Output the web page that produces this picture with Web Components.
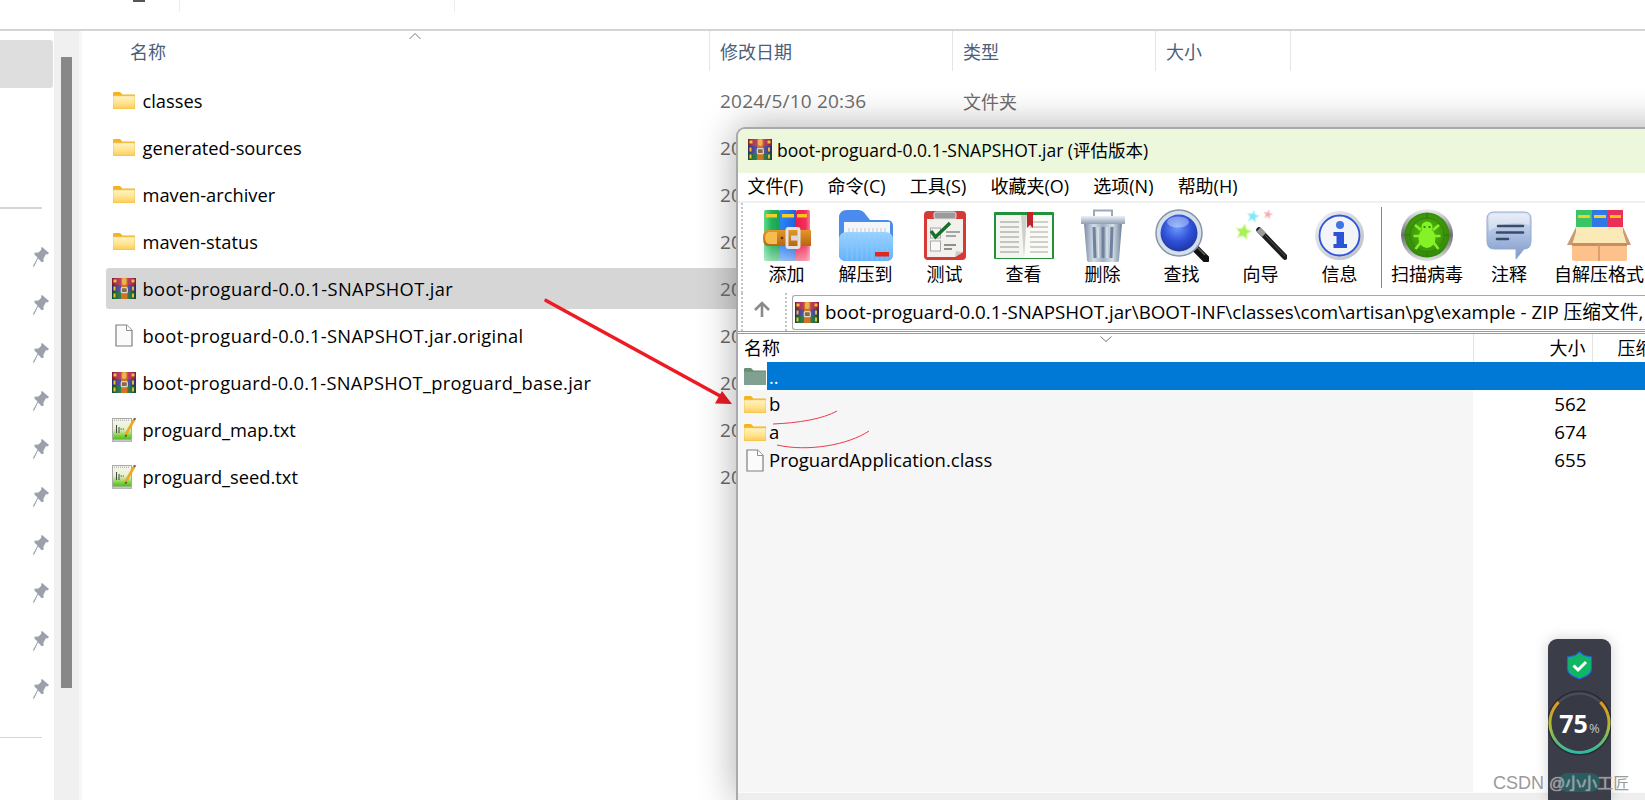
<!DOCTYPE html>
<html lang="zh-CN"><head><meta charset="utf-8"><title>WinRAR</title>
<style>
html,body{margin:0;padding:0;background:#fff}
body{width:1645px;height:800px;overflow:hidden;position:relative;font-family:"Open Sans","Noto Sans CJK SC",sans-serif;font-size:18px;color:#000}
</style></head><body>
<win-explorer>
  <file-row icon="folder" date="2024/5/10 20:36" type="文件夹">classes</file-row>
  <file-row icon="folder" date="20">generated-sources</file-row>
  <file-row icon="folder" date="20">maven-archiver</file-row>
  <file-row icon="folder" date="20">maven-status</file-row>
  <file-row icon="rar" date="20" selected style="--ls:.36px">boot-proguard-0.0.1-SNAPSHOT.jar</file-row>
  <file-row icon="doc" date="20" style="--ls:.33px">boot-proguard-0.0.1-SNAPSHOT.jar.original</file-row>
  <file-row icon="rar" date="20" style="--ls:.3px">boot-proguard-0.0.1-SNAPSHOT_proguard_base.jar</file-row>
  <file-row icon="txt" date="20">proguard_map.txt</file-row>
  <file-row icon="txt" date="20">proguard_seed.txt</file-row>
</win-explorer>
<annotation-arrow></annotation-arrow>
<rar-window></rar-window>
<guard-widget></guard-widget>
<water-mark>CSDN <span style="font-size:16px">@小小工匠</span></water-mark>
<script>
const star=(cx,cy,r,f,s)=>{let p=[];for(let i=0;i<10;i++){const a=-Math.PI/2+i*Math.PI/5+.2,q=i%2?r*.5:r;p.push((cx+q*Math.cos(a)).toFixed(1)+','+(cy+q*Math.sin(a)).toFixed(1));}return `<polygon points="${p.join(' ')}" fill="${f}" stroke="${s}" stroke-width="1.2" stroke-linejoin="round"/>`;};
const ICONS={
rar:[24,21,`<defs><linearGradient id="b" x1="0" x2="1"><stop offset="0" stop-color="#000" stop-opacity=".35"/><stop offset=".5" stop-color="#fff" stop-opacity=".1"/><stop offset="1" stop-color="#000" stop-opacity=".35"/></linearGradient></defs>
<rect width="24" height="7" fill="#c2244f"/><rect y="7" width="24" height="7" fill="#3f3f9f"/><rect y="14" width="24" height="7" fill="#17703a"/><rect width="24" height="21" fill="url(#b)"/>
<rect x="1.5" y="1.5" width="3" height="3" fill="#f2c12e"/><rect x="19.5" y="1.5" width="3" height="3" fill="#f2c12e"/><rect x="1.5" y="8.5" width="2" height="4" fill="#f2c12e"/><rect x="20" y="8.5" width="2" height="4" fill="#e8b93a"/><rect x="1.5" y="15.5" width="2" height="4" fill="#f2c12e"/><rect x="20" y="15.5" width="2" height="4" fill="#e8b93a"/>
<rect x="9" y="0" width="6.5" height="21" fill="#cf7420"/><rect x="10" y="0" width="4.5" height="7" rx="2" fill="#eab455"/><rect x="9.3" y="9.7" width="6" height="5" rx="1" fill="#8d6a3c" stroke="#d8d8d8" stroke-width="1.2"/>`],
folder:[22,17,`<defs><linearGradient id="g" x1="0" y1="0" x2="0" y2="1"><stop offset="0" stop-color="#fff4c4"/><stop offset=".55" stop-color="#ffe48f"/><stop offset="1" stop-color="#fdcb55"/></linearGradient></defs>
<path d="M0 1.2Q0 0 1.2 0H7L9.5 2.6H22V6H0Z" fill="#f5b41f"/><path d="M0 3.8H22V16.2Q22 17 21.2 17H.8Q0 17 0 16.2Z" fill="url(#g)" stroke="#eab53a" stroke-width=".6"/>`],
up:[22,17,`<path d="M0 1.2Q0 0 1.2 0H7L9.5 2.6H22V6H0Z" fill="#6d8c74"/><path d="M0 3.8H22V17H0Z" fill="#7ea191"/>`],
doc:[18,23,`<path d="M1 1H11.5L17 6.5V22H1Z" fill="#fbfbfb" stroke="#7f7f7f" stroke-width="1.2"/><path d="M11.5 1V6.5H17" fill="#fff" stroke="#8f8f8f" stroke-width="1"/>`],
txt:[24,24,`<defs><linearGradient id="t" x1="0" y1="0" x2="0" y2="1"><stop offset="0" stop-color="#f6f8f0"/><stop offset=".45" stop-color="#e6f0cc"/><stop offset=".75" stop-color="#7fd13a"/><stop offset="1" stop-color="#3ea72d"/></linearGradient></defs>
<rect x=".5" y=".5" width="19" height="23" fill="url(#t)" stroke="#a9a9a9"/><path d="M2 2.2H18" stroke="#9a9a9a" stroke-dasharray="1 1"/><path d="M4.5 7V15M7 9V15" stroke="#444" stroke-width="1"/><path d="M8.5 11H12" stroke="#555" stroke-dasharray="1.5 .8"/><rect x=".5" y="21.5" width="19" height="2" fill="#c6c6c6"/>
<path d="M22.5 1L13.5 17" stroke="#f0a81e" stroke-width="2.6"/><path d="M13.8 16.4L12.6 19.6L15.2 17.6Z" fill="#333"/><path d="M22 1.8L23.4.2" stroke="#666" stroke-width="2"/>`],
add:[48,51,`<defs><linearGradient id="a1" x1="0" x2="1"><stop offset="0" stop-color="#5fd98a"/><stop offset=".45" stop-color="#23b45c"/><stop offset="1" stop-color="#1c9f50"/></linearGradient><linearGradient id="a2" x1="0" x2="1"><stop offset="0" stop-color="#2a86f2"/><stop offset=".6" stop-color="#2472e8"/><stop offset="1" stop-color="#2560d4"/></linearGradient><linearGradient id="a3" x1="0" x2="1"><stop offset="0" stop-color="#e81f4c"/><stop offset=".7" stop-color="#f1305b"/><stop offset="1" stop-color="#f97d9b"/></linearGradient><linearGradient id="a4" x1="0" x2="0" y2="1"><stop offset="0" stop-color="#e3962a"/><stop offset="1" stop-color="#b86512"/></linearGradient><linearGradient id="a5" x1="0" x2="0" y2="1"><stop offset=".6" stop-color="#fff" stop-opacity="0"/><stop offset="1" stop-color="#fff" stop-opacity=".5"/></linearGradient></defs>
<rect x="1" width="16" height="51" rx="1.5" fill="url(#a1)"/><rect x="17" width="16" height="51" fill="url(#a2)"/><rect x="33" width="14" height="51" rx="1.5" fill="url(#a3)"/><rect x="1" width="46" height="51" fill="url(#a5)"/>
<rect x="3" y="4" width="11" height="3.5" fill="#f3cf2a"/><rect x="19" y="4" width="12" height="3.5" fill="#f3cf2a"/><rect x="34" y="4" width="10" height="3.5" fill="#f6c21c"/>
<path d="M5 20H48V36H5Q0 36 0 28Q0 20 5 20Z" fill="url(#a4)"/><path d="M6 22Q2 23 2 28Q2 33 6 34H14V22Z" fill="#f5bc4e"/><circle cx="19" cy="28" r="1.3" fill="#5a3208"/>
<rect x="24" y="18.5" width="12" height="19" rx="1.5" fill="none" stroke="#e3e3e3" stroke-width="3"/><rect x="28" y="25.5" width="8" height="5" fill="#d9d9d9"/>`],
extract:[54,51,`<defs><linearGradient id="e1" x1="0" x2="0" y2="1"><stop offset="0" stop-color="#9bd3ff"/><stop offset="1" stop-color="#64b2fb"/></linearGradient></defs>
<path d="M0 8Q0 0 8 0H19Q24 0 27 5L31 10H48Q54 10 54 16V44Q54 51 47 51H7Q0 51 0 44Z" fill="#4a8bed"/><path d="M5 12H51V30H5Z" fill="#f4f6f8"/><path d="M10 18V28M14 18V28M18 18V28M22 18V28M26 18V28M30 18V28M34 18V28M38 18V28M42 18V28M46 18V28" stroke="#c3cbd4"/>
<path d="M0 30Q0 22 8 22H46Q54 22 54 30V44Q54 51 47 51H7Q0 51 0 44Z" fill="url(#e1)"/><path d="M8 24V50M13 24V50M18 24V50M23 24V50M28 24V50M33 24V50M38 24V50M43 24V50M48 24V50" stroke="#8ec8fb" stroke-width=".8"/><rect x="36" y="42" width="14" height="4.5" fill="#e0281f"/>`],
test:[42,49,`<rect width="42" height="49" rx="4" fill="#d63a36"/><path d="M3 8H39V41L31 46H3Z" fill="#f3f1ee"/><path d="M31 46L39 41L32 40Z" fill="#cfcac5"/><rect x="10" y="1" width="22" height="7" rx="2" fill="#9a9a9a" stroke="#e3e3e3"/><rect x="6.5" y="17" width="10" height="10" fill="none" stroke="#a8a8a8"/><path d="M7 20L11.5 26L26 12" fill="none" stroke="#17702a" stroke-width="3.4"/><path d="M22 21H36M22 25H32" stroke="#8c8c8c" stroke-width="1.3"/><rect x="6.5" y="30" width="10" height="10" fill="#f8f8f8" stroke="#a8a8a8"/><path d="M20 34H32M20 38H28" stroke="#6f6f6f" stroke-width="1.5"/>`],
view:[60,49,`<rect y="1" width="60" height="47" rx="1" fill="#23903c"/><path d="M2 4H27Q30 4 30 7V47H2Z" fill="#f4f4f0"/><path d="M58 4H33Q30 4 30 7V47H58Z" fill="#fafaf6"/><path d="M27 4L30 47L33 4Z" fill="#d0d0ca"/><path d="M6 11H25M6 16H25M6 21H25M6 26H25M6 31H25M6 36H25M6 41H25" stroke="#b5b5b0" stroke-width="1.4"/><path d="M36 11H54M36 16H54M36 21H54M36 26H54M36 31H54M36 36H54M36 41H54" stroke="#c3c3be" stroke-width="1.4"/><path d="M33 1H39V17L36 14L33 17Z" fill="#c2232b"/>`],
del:[46,53,`<defs><linearGradient id="d1" x1="0" x2="1"><stop offset="0" stop-color="#7a8ea7"/><stop offset=".25" stop-color="#d3dce6"/><stop offset=".5" stop-color="#9fb0c3"/><stop offset=".75" stop-color="#d6dee7"/><stop offset="1" stop-color="#6e829b"/></linearGradient><linearGradient id="d2" x1="0" y1="0" x2="0" y2="1"><stop offset="0" stop-color="#eef2f6"/><stop offset="1" stop-color="#8ea0b6"/></linearGradient></defs>
<path d="M14 7V1.5H32V7" fill="none" stroke="#9aa9ba" stroke-width="2"/><path d="M1 7H45V15H1Z" fill="url(#d2)"/><path d="M4 15H42L39 51Q39 53 36 53H10Q7 53 7 51Z" fill="url(#d1)"/><path d="M14 18L15 49M23 18V49M32 18L31 49" stroke="#6e829b" stroke-width="3"/><path d="M18 18L18.6 49M27 18L27 49" stroke="#f0f3f7" stroke-width="1.2" opacity=".8"/>`],
find:[54,53,`<defs><radialGradient id="f1" cx=".45" cy=".35" r=".7"><stop offset="0" stop-color="#6d9cff"/><stop offset=".55" stop-color="#2f50d8"/><stop offset="1" stop-color="#1b3398"/></radialGradient></defs>
<path d="M37 36L51 50" stroke="#111" stroke-width="7.5" stroke-linecap="round"/><path d="M39 35L50 46" stroke="#666" stroke-width="1.4"/><circle cx="24" cy="24" r="23" fill="#d6dfe9" stroke="#8495ab" stroke-width="1.5"/><circle cx="24" cy="24" r="18.5" fill="url(#f1)"/><ellipse cx="23" cy="13" rx="11" ry="5.5" fill="#fff" opacity=".35"/>`],
wiz:[52,50,`${star(18,6.5,6,'#7fe8f8','#c7f4fb')}${star(33,4.5,4.2,'#f7a9ad','#fbd1d3')}${star(8.5,22,8,'#a8f158','#dcfbae')}<path d="M24 20L50 47" stroke="#1d1d1d" stroke-width="5.5" stroke-linecap="round"/><path d="M23.5 19.5L29 25" stroke="#9b9b9b" stroke-width="5.5"/><path d="M30 25L50 46" stroke="#555" stroke-width="1"/>`],
info:[49,49,`<defs><linearGradient id="i1" x1="0" y1="0" x2="1" y2="1"><stop offset="0" stop-color="#eef0f4"/><stop offset="1" stop-color="#b9bdc6"/></linearGradient></defs><circle cx="24.5" cy="24.5" r="24.5" fill="url(#i1)"/><circle cx="24.5" cy="24.5" r="20" fill="#f3f4f7" stroke="#2f55d9" stroke-width="1.8"/><circle cx="25" cy="14" r="4" fill="#3d74e8"/><path d="M18.5 21H29V33H32V37H18.5V33H21.5V25H18.5Z" fill="#2a53d8"/>`],
scan:[52,52,`<defs><radialGradient id="s1" cx=".5" cy=".45" r=".62"><stop offset="0" stop-color="#58bd10"/><stop offset="1" stop-color="#2c7f08"/></radialGradient><linearGradient id="s2" x1="0" y1="0" x2="0" y2="1"><stop offset="0" stop-color="#f0f2f2"/><stop offset=".5" stop-color="#6c6e6d"/><stop offset="1" stop-color="#dfe2e2"/></linearGradient></defs><circle cx="26" cy="26" r="26" fill="url(#s2)"/><circle cx="26" cy="26" r="22.5" fill="url(#s1)"/><circle cx="26" cy="26" r="17" fill="none" stroke="#327f0a" stroke-width="1"/><path d="M26 4V9M26 43V48M4 26H9M43 26H48" stroke="#327f0a" stroke-width="1.4"/>
<g fill="none" stroke="#84f226" stroke-width="2.6"><path d="M14 16L20 21M38 16L32 21M12.5 27H19M39.5 27H33M14.5 40L20 33M37.5 40L32 33"/></g><ellipse cx="26" cy="29" rx="8.5" ry="10" fill="#84f226"/><circle cx="26" cy="18" r="5.5" fill="#84f226"/><circle cx="23.5" cy="18" r="1.1" fill="#2a7a06"/><circle cx="28.5" cy="18" r="1.1" fill="#2a7a06"/>`],
note:[46,49,`<defs><linearGradient id="n1" x1="0" y1="0" x2="0" y2="1"><stop offset="0" stop-color="#dfe7f6"/><stop offset=".5" stop-color="#a9bde0"/><stop offset="1" stop-color="#7f99c9"/></linearGradient></defs><path d="M8 1H38Q45 1 45 8V30Q45 38 38 38H38L30 48V38H8Q1 38 1 30V8Q1 1 8 1Z" fill="url(#n1)" stroke="#94a9cf"/><path d="M8 3H38Q43 3 43 8V14Q23 8 3 20V8Q3 3 8 3Z" fill="#fff" opacity=".35"/><path d="M12 15H37M11 21.5H37M11 28H22" stroke="#394b69" stroke-width="2.6" stroke-linecap="round"/>`],
sfx:[64,51,`<rect x="9" y="0" width="16" height="20" fill="#38c566"/><rect x="25" y="0" width="16" height="20" fill="#2f78e6"/><rect x="41" y="0" width="15" height="20" fill="#ea2f58"/><rect x="11" y="5" width="12" height="3" fill="#f3cf2a"/><rect x="27" y="5" width="12" height="3" fill="#f3cf2a"/><rect x="43" y="5" width="11" height="3" fill="#f6c21c"/>
<path d="M9 17H56L60 33H5Z" fill="#fbeab8"/><path d="M9 17L0 35H5L9 22ZM56 17L64 35H60L56 22Z" fill="#c99a74"/><path d="M5 33H60V49Q60 51 58 51H7Q5 51 5 49Z" fill="#fdc18c"/><path d="M5 33H60V36H5Z" fill="#c98e5f"/><path d="M32 34V51" stroke="#cf9569" stroke-width="1.5"/>`]
};
function def(name,html,init){const t=document.createElement('template');t.innerHTML=html;customElements.define(name,class extends HTMLElement{connectedCallback(){if(this.shadowRoot)return;const r=this.attachShadow({mode:'open'});r.appendChild(t.content.cloneNode(true));init&&init(this,r);}});}
customElements.define('app-icon',class extends HTMLElement{
  static get observedAttributes(){return ['name'];}
  attributeChangedCallback(){this.render();}
  connectedCallback(){this.render();}
  render(){const n=this.getAttribute('name');if(!n||!ICONS[n])return;const [w,h,b]=ICONS[n];const r=this.shadowRoot||this.attachShadow({mode:'open'});r.innerHTML=`<style>:host{display:inline-flex;flex:none}svg{display:block}</style><svg xmlns="http://www.w3.org/2000/svg" width="${w}" height="${h}" viewBox="0 0 ${w} ${h}">${b}</svg>`;}
});
def('win-explorer',`<style>:host{display:flex;flex-direction:column;width:1645px;height:800px}
.top{height:29px;flex:none;border-bottom:2px solid #d4d4d4;display:flex;position:relative;box-sizing:content-box}
.t1{width:179px;height:12px;position:relative;border-right:1px solid #ececec}.t1 i{position:absolute;left:133px;top:0;width:12px;height:1.5px;background:#555}
.t2{width:274px;height:12px;border-right:1px solid #ececec}
.main{flex:1;display:flex;min-height:0}</style>
<div class="top"><div class="t1"><i></i></div><div class="t2"></div></div>
<div class="main"><nav-side></nav-side><file-pane><slot></slot></file-pane></div>`);
def('nav-side',`<style>:host{display:flex;flex:none;width:79px}
.items{width:54px;display:flex;flex-direction:column;padding-top:9px;box-sizing:border-box}
.sel{height:48px;width:53px;background:#dedede;border-radius:0 3px 3px 0;flex:none}
.sep{height:1.5px;width:42px;background:#d4d4d4;flex:none}
.s1{margin-top:119px}.pins{display:flex;flex-direction:column;margin-top:24px}
.pins div{height:48px;display:flex;align-items:center;justify-content:flex-end;padding-right:4px}
.s2{margin-top:24px}
.track{width:25px;background:#f0f0f0;padding:26px 7px 0;box-sizing:border-box}
.thumb{height:631px;width:11px;background:#888}</style>
<div class="items"><div class="sel"></div><div class="sep s1"></div><div class="pins" id="p"></div><div class="sep s2"></div></div>
<div class="track"><div class="thumb"></div></div>`,(h,r)=>{r.getElementById('p').innerHTML=Array(10).fill('<div><svg width="17" height="22" viewBox="0 0 17 22"><path d="M9 1L16 7L14.5 8.5L13 8L10.5 12.5L10.5 16L8.5 16L5 12.5L1 21L0 20L4.5 11.5L1.5 8.5L1.5 6.8L5.5 6.5L8.5 3.5L8 2Z" fill="#9aa1aa"/></svg></div>').join('');});
def('file-pane',`<style>:host{display:block;flex:1;border-left:3px solid #f8f8f8;min-width:0}
.hd{display:flex;height:40px;position:relative;color:#4c607a;line-height:42px;margin-bottom:9px}
.c{box-sizing:border-box;padding-left:10px;border-right:1px solid #e5e5e5;flex:none}
.c1{width:628px;padding-left:48px}.c2{width:243px}.c3{width:203px}.c4{width:135px}
.caret{position:absolute;left:326px;top:1px}
.rows{display:flex;flex-direction:column;gap:6px}</style>
<div class="hd"><div class="c c1">名称</div><div class="c c2">修改日期</div><div class="c c3">类型</div><div class="c c4">大小</div>
<svg class="caret" width="14" height="8" viewBox="0 0 14 8"><path d="M1.5 7L7 1.5L12.5 7" fill="none" stroke="#777" stroke-width="1"/></svg></div>
<div class="rows"><slot></slot></div>`);
def('file-row',`<style>:host{display:flex;align-items:center;height:41px;margin-left:24px;padding-left:6px;border-radius:3px 0 0 3px}
:host([selected]){background:#d6d6d6}
.ic{width:24px;height:24px;display:flex;align-items:center;justify-content:center;flex:none}
.n{width:584px;flex:none;padding-left:6.5px;box-sizing:border-box;white-space:nowrap;font-size:18.3px;letter-spacing:var(--ls,0)}
.d{width:243px;flex:none;color:#6d6d6d;font-size:19px;letter-spacing:.2px}.t{color:#6d6d6d}</style>
<span class="ic"><app-icon></app-icon></span><span class="n"><slot></slot></span><span class="d"></span><span class="t"></span>`,(h,r)=>{r.querySelector('app-icon').setAttribute('name',h.getAttribute('icon'));r.querySelector('.d').textContent=h.getAttribute('date')||'';r.querySelector('.t').textContent=h.getAttribute('type')||'';});
def('annotation-arrow',`<style>:host{position:absolute;left:0;top:0;width:1645px;height:800px;pointer-events:none;display:block}</style>
<svg width="1645" height="800"><path d="M546 300.5L722 397" stroke="#ed1c24" stroke-width="3.6" stroke-linecap="round"/><path d="M732 404L715 403.5L722 391Z" fill="#ed1c24"/></svg>`);
def('tool-btn',`<style>:host{display:flex;flex-direction:column;align-items:center;width:var(--w,79px);flex:none;height:90px;box-sizing:border-box}
.i{height:59px;display:flex;align-items:center;justify-content:center;padding-top:5px;box-sizing:border-box}.l{white-space:nowrap;line-height:24px}</style>
<div class="i"><app-icon></app-icon></div><div class="l"><slot></slot></div>`,(h,r)=>{r.querySelector('app-icon').setAttribute('name',h.getAttribute('icon'));});
def('rar-window',`<style>:host{position:absolute;left:736px;top:127px;width:960px;height:673px;box-sizing:border-box;display:flex;flex-direction:column;background:#fff;border:solid #a9a9ad;border-width:2px 0 0 2.5px;border-top-left-radius:9px;box-shadow:0 0 38px rgba(0,0,0,.33);overflow:visible}
.title{height:44px;background:#ecf7dc;display:flex;align-items:center;gap:5px;padding-left:10px;flex:none;border-top-left-radius:7px;white-space:nowrap;font-size:17.5px}
.title app-icon{position:relative;top:-1.5px}.title span{position:relative;top:-2px}
.menu{height:28px;display:flex;align-items:flex-start;padding-left:9.5px;flex:none;line-height:26px}.menu span{margin-right:24.2px;white-space:nowrap}
.band{height:2px;background:#f0f0f0;flex:none}
.tb{height:90px;display:flex;flex:none;position:relative;padding-left:9px}
.grip{width:0;border-left:2px dotted #c4c4c4;position:absolute;left:3px;top:0;bottom:0}
.sep{width:1px;background:#888;height:81px;margin:4px 2px 0 2px;flex:none}
.addr{height:38px;display:flex;flex:none;align-items:center;position:relative}
.up{width:47px;display:flex;justify-content:center;flex:none;padding-left:1px;padding-bottom:6px;box-sizing:border-box}
.grip2{position:absolute;left:47px;top:0;bottom:0;border-left:2px dotted #c4c4c4}
.box{flex:1;height:33px;margin-left:7px;border:1px solid #a8a8a8;border-right:0;border-radius:3px 0 0 3px;display:flex;align-items:center;padding-left:2px;gap:6px;white-space:nowrap;overflow:hidden;font-size:18.75px}
.box span{position:relative;top:-2px}
.line{height:3px;border:solid #9a9a9a;border-width:1px 0;flex:none;box-sizing:border-box;background:#fff}
.lh{display:flex;height:28px;flex:none;line-height:29px;position:relative}
.lh div{box-sizing:border-box;flex:none;border-right:1.5px solid #e4e4e4}
.w1{width:735.5px}.w2{width:119px}
.lh .a{padding-left:6px}.lh .r{text-align:right;padding-right:6px}.lh .l3{padding-left:25px;border:0;white-space:nowrap;width:120px}
.chev{position:absolute;left:361px;top:1px}
.list{flex:1;min-height:0;display:grid;grid-template-columns:735.5px 119px;grid-auto-rows:28px;position:relative;background:linear-gradient(90deg,#f6f6f6 735.5px,#fff 735.5px)}
.nm{display:flex;align-items:center;padding-left:5px;gap:3px;white-space:nowrap;font-size:18.5px;line-height:26px}
.sz{text-align:right;padding-right:6px;line-height:28px;font-size:18.8px}
.blue{grid-column:1/-1;background:linear-gradient(90deg,#fff 29px,#0078d6 29px);display:flex;align-items:center;padding-left:5px;gap:3px;color:#fff;width:909px}
.nmi{width:23px;display:flex;justify-content:center;flex:none}
.blue b{font-weight:400;position:relative;top:1px}
.status{height:8px;background:#eee;border-top:1px solid #fbfbfb;box-sizing:border-box;flex:none}
.ink{position:absolute;left:0;top:1px;pointer-events:none}</style>
<div class="title"><app-icon name="rar"></app-icon><span>boot-proguard-0.0.1-SNAPSHOT.jar (评估版本)</span></div>
<div class="menu"><span>文件(F)</span><span>命令(C)</span><span>工具(S)</span><span>收藏夹(O)</span><span>选项(N)</span><span>帮助(H)</span></div>
<div class="band"></div>
<div class="tb"><i class="grip"></i>
<tool-btn icon="add">添加</tool-btn><tool-btn icon="extract">解压到</tool-btn><tool-btn icon="test">测试</tool-btn><tool-btn icon="view">查看</tool-btn><tool-btn icon="del">删除</tool-btn><tool-btn icon="find">查找</tool-btn><tool-btn icon="wiz">向导</tool-btn><tool-btn icon="info">信息</tool-btn><div class="sep"></div><tool-btn icon="scan" style="--w:86px">扫描病毒</tool-btn><tool-btn icon="note" style="--w:78px">注释</tool-btn><tool-btn icon="sfx" style="--w:102px">自解压格式</tool-btn></div>
<div class="addr"><i class="grip"></i><i class="grip2"></i><div class="up"><svg width="18" height="17" viewBox="0 0 18 17"><path d="M9 16V2M2 9L9 2L16 9" fill="none" stroke="#8a8a8a" stroke-width="2.6"/></svg></div><div class="box"><app-icon name="rar"></app-icon><span>boot-proguard-0.0.1-SNAPSHOT.jar\\BOOT-INF\\classes\\com\\artisan\\pg\\example - ZIP 压缩文件,</span></div></div>
<div class="line"></div>
<div class="lh"><div class="w1 a">名称</div><div class="w2 r">大小</div><div class="l3">压缩</div><svg class="chev" width="14" height="8" viewBox="0 0 14 8"><path d="M1.5 1.5L7 6.5L12.5 1.5" fill="none" stroke="#777"/></svg></div>
<div class="list">
<div class="blue"><span class="nmi"><app-icon name="up"></app-icon></span><b>..</b></div>
<div class="nm"><span class="nmi"><app-icon name="folder"></app-icon></span>b</div><div class="sz">562</div>
<div class="nm"><span class="nmi"><app-icon name="folder"></app-icon></span>a</div><div class="sz">674</div>
<div class="nm"><span class="nmi"><app-icon name="doc"></app-icon></span>ProguardApplication.class</div><div class="sz">655</div>
<svg class="ink" width="400" height="120" viewBox="0 0 400 120"><path d="M35 61C60 60 85 56 99 48" fill="none" stroke="#ec3a4c" stroke-width="1"/><path d="M39 82C70 89 110 82 131 68" fill="none" stroke="#ec3a4c" stroke-width="1"/></svg>
</div>
<div class="status"></div>`);
def('guard-widget',`<style>:host{position:absolute;left:1548px;top:639px;width:63px;height:161px;background:#3b3d48;border-radius:9px 9px 0 0;box-shadow:0 0 14px rgba(0,0,0,.18);display:block}
svg{display:block}.g{position:absolute;left:0;top:0}.n{position:absolute;left:0;right:0;top:67px;text-align:center;color:#fff;font:700 25px/34px "Open Sans",sans-serif;white-space:nowrap}.n small{font:400 13px "Open Sans",sans-serif;color:#c4c6cc;margin-left:1px}
.blob{position:absolute;left:10px;top:134px;width:42px;height:19px;background:#2a5c60;border-radius:9px}</style>
<svg class="g" width="63" height="120" viewBox="0 0 63 120"><defs><linearGradient id="arc" x1="0" y1="0" x2="0" y2="1"><stop offset="0" stop-color="#e3961c"/><stop offset=".5" stop-color="#a8bd3a"/><stop offset="1" stop-color="#2fb8a4"/></linearGradient></defs>
<path d="M31.5 13L36 16.5L43.5 18V30Q43.5 36 31.5 40Q19.5 36 19.5 30V18L27 16.5Z" fill="#0fb765" stroke="#2a5fe0" stroke-width="1.2"/><path d="M25.5 26.5L30 31L38 23" fill="none" stroke="#fff" stroke-width="3"/>
<circle cx="31.5" cy="84" r="31" fill="#30323c" stroke="#2a2c35" stroke-width="3"/><circle cx="31.5" cy="84" r="29.5" fill="#373944" stroke="#4a4c58" stroke-width="2.6"/>
<path d="M10.6 63.1A29.5 29.5 0 0 0 31.5 113.5A29.5 29.5 0 0 0 52.4 63.1" fill="none" stroke="url(#arc)" stroke-width="3"/></svg>
<div class="n">75<small>%</small></div><div class="blob"></div>`);
def('water-mark',`<style>:host{position:absolute;left:1493px;top:772px;display:block;color:#9a9a9a;font:18px/22px "Liberation Sans","Noto Sans CJK SC",sans-serif;white-space:nowrap;text-shadow:0 0 1px rgba(255,255,255,.7)}</style><slot></slot>`);
</script>
</body></html>
